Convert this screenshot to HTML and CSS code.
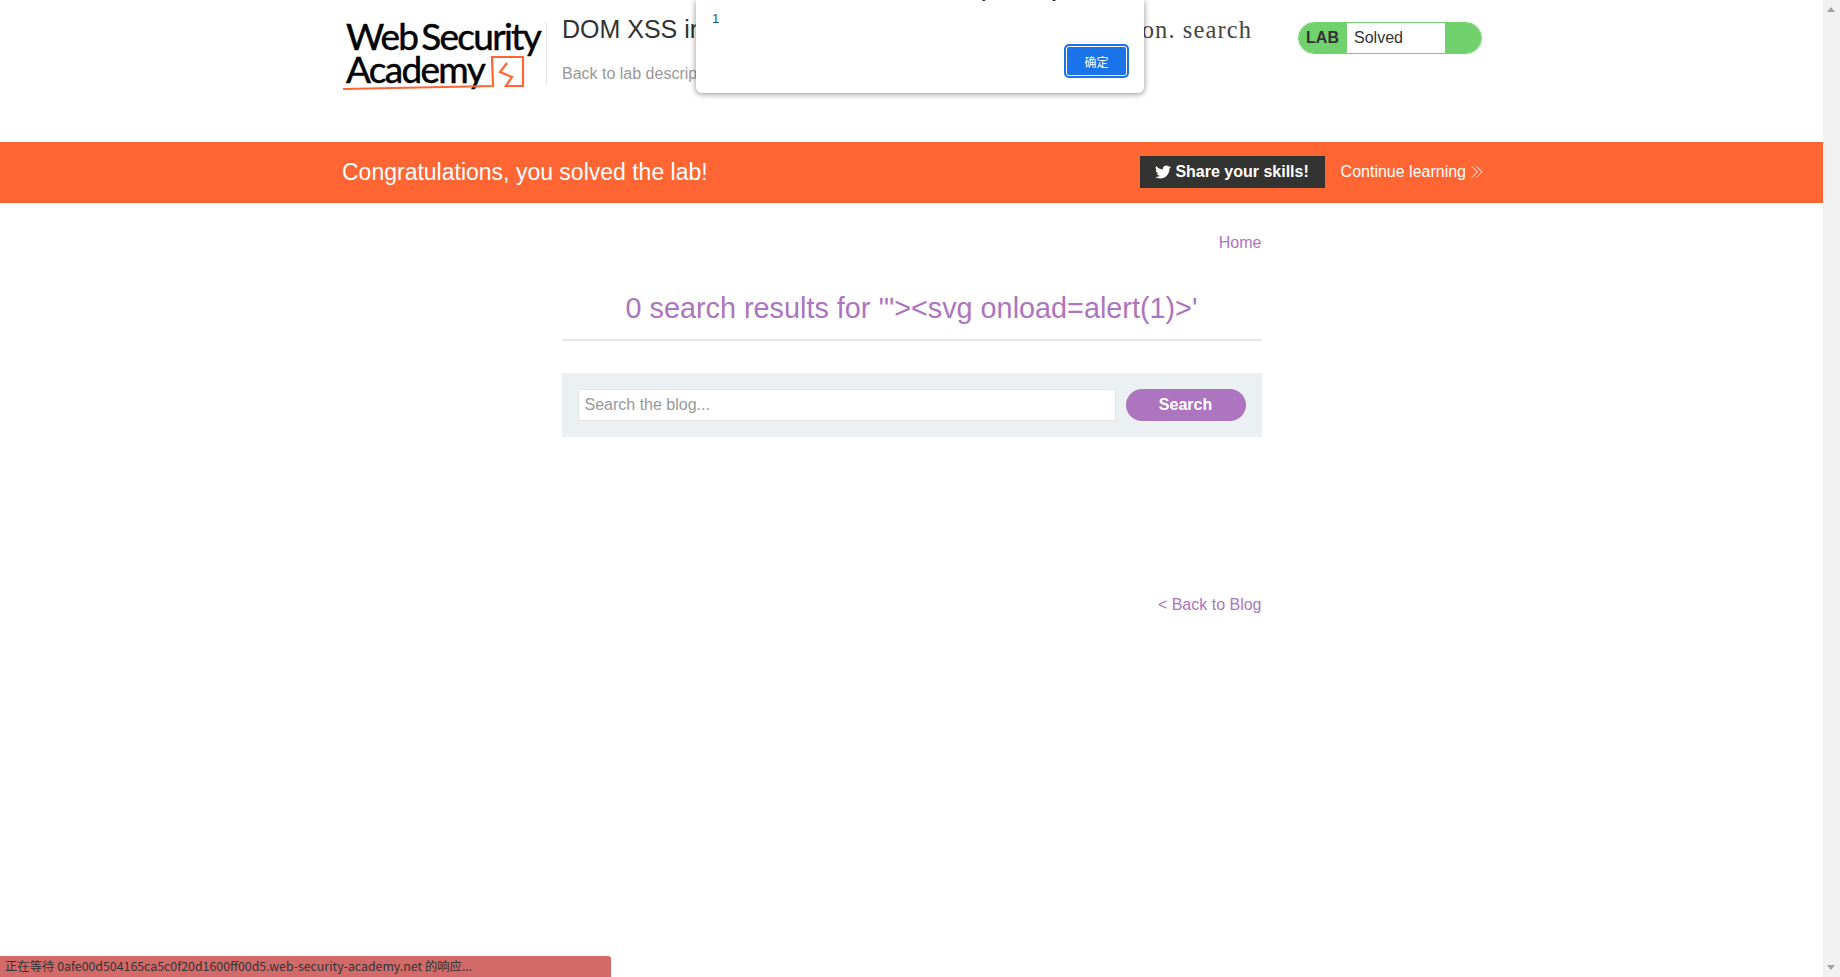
FILE: index.html
```html
<!DOCTYPE html>
<html lang="en">
<head>
    <meta charset="UTF-8">
    <title>DOM XSS in document.write sink using source location.search</title>
    <link rel="stylesheet" href="styles.css">
</head>
<body>

<div class="viewport">
    <div class="page">
        <header class="lab-header">
            <div class="logo">
                <div class="logo-line">Web Security</div>
                <div class="logo-line">Academy</div>
                <svg class="logo-mark" viewBox="0 0 204 72" fill="none">
                    <path d="M165 43 L158 52 L170 57 L164 66 L181 66 L181 37 L150 37 L151 66 C100 67 50 68 1 69" stroke="#ff6633" stroke-width="2.2"/>
                </svg>
            </div>
            <div class="lab-title">
                <h2><span class="title-main">DOM XSS in document.write sink using source</span> <span class="title-code">location. search</span></h2>
                <a class="back-link" href="#">Back to lab description</a>
            </div>
            <div class="lab-status">
                <span class="lab-label">LAB</span>
                <span class="lab-state">Solved</span>
                <span class="lab-end"></span>
            </div>
        </header>

        <section class="solved-banner">
            <div class="banner-inner">
                <h4>Congratulations, you solved the lab!</h4>
                <div class="banner-actions">
                    <a class="share-btn" href="#">
                        <svg class="tw-icon" viewBox="0 0 24 24"><path fill="#fff" d="M23.95 4.57a10 10 0 0 1-2.82.77 4.96 4.96 0 0 0 2.16-2.72c-.95.55-2 .95-3.12 1.18a4.92 4.92 0 0 0-8.38 4.48C7.69 8.1 4.07 6.13 1.64 3.16a4.82 4.82 0 0 0-.67 2.48c0 1.71.87 3.21 2.19 4.1a4.9 4.9 0 0 1-2.23-.62v.06a4.92 4.92 0 0 0 3.95 4.83 5 5 0 0 1-2.21.08 4.94 4.94 0 0 0 4.6 3.42A9.87 9.87 0 0 1 0 19.54a14 14 0 0 0 7.56 2.21c9.05 0 14-7.5 14-13.98 0-.21 0-.42-.02-.63a9.94 9.94 0 0 0 2.46-2.55z"/></svg>
                        Share your skills!
                    </a>
                    <a class="continue-link" href="#">Continue learning
                        <svg class="chevrons" viewBox="0 0 13 13" fill="none"><path d="M1 .5l6 6-6 6M6 .5l6 6-6 6" stroke="#fff" stroke-width="1"/></svg>
                    </a>
                </div>
            </div>
        </section>

        <main class="blog">
            <nav class="blog-nav"><a href="#">Home</a></nav>
            <h1>0 search results for '"&gt;&lt;svg onload=alert(1)&gt;'</h1>
            <hr class="rule">
            <form class="search-box">
                <input type="text" placeholder="Search the blog...">
                <button type="button">Search</button>
            </form>
            <div class="back-row"><a href="#">&lt; Back to Blog</a></div>
        </main>
    </div>

    <div class="scrollbar">
        <span class="arrow arrow-up"></span>
        <span class="arrow arrow-down"></span>
    </div>
</div>

<!-- Диалог alert поверх страницы -->
<div class="alert-box">
    <div class="alert-title">0afe00d504165ca5c0f20d1600ff00d5.web-security-academy.net 显示</div>
    <div class="alert-msg">1</div>
    <button class="alert-ok" type="button">确定</button>
</div>

<div class="status-bar">正在等待 0afe00d504165ca5c0f20d1600ff00d5.web-security-academy.net 的响应...</div>

</body>
</html>
```

FILE: styles.css
```css
html, body {
    margin: 0;
    height: 100%;
    overflow: hidden;
}

body {
    font-family: "Liberation Sans", Arial, sans-serif;
    color: #333332;
    background: #fff;
}

a {
    text-decoration: none;
    color: #ad75c0;
}

.viewport {
    display: flex;
    height: 977px;
}

.page {
    flex: 1;
    min-width: 0;
}

/* Шапка */
.lab-header {
    display: flex;
    align-items: flex-start;
    height: 142px;
    margin: 0 341px 0 342px;
}

.logo {
    position: relative;
    flex: none;
    width: 204px;
    height: 72px;
    margin-top: 19px;
    padding-left: 4px;
    box-sizing: border-box;
    font-family: Lato, "Open Sans", sans-serif;
    font-size: 37px;
    line-height: 33px;
    letter-spacing: -1.7px;
    word-spacing: -4px;
    color: #000;
    -webkit-text-stroke: 0.5px #000;
    white-space: nowrap;
}

.logo-mark {
    position: absolute;
    left: 0;
    top: 1px;
    width: 204px;
    height: 72px;
}

.lab-title {
    display: flex;
    flex-direction: column;
    flex: none;
    box-sizing: border-box;
    width: 706px;
    height: 63px;
    margin-top: 22px;
    padding-left: 15px;
    border-left: 1px solid #e6e6e6;
}

.lab-title h2 {
    display: flex;
    justify-content: space-between;
    margin: -8px 0 0;
    font-size: 25px;
    font-weight: normal;
    line-height: 30px;
    white-space: nowrap;
    overflow: hidden;
}

.title-main {
    min-width: 0;
    overflow: hidden;
}

.title-code {
    flex: none;
    padding-top: 1px;
    font-family: "Liberation Serif", serif;
    font-size: 24.5px;
    letter-spacing: 1.1px;
    color: #444;
}

.back-link {
    margin-top: 19px;
    color: #999;
    font-size: 16px;
    line-height: 20px;
    white-space: nowrap;
}

.lab-status {
    display: flex;
    align-items: stretch;
    flex: none;
    width: 184px;
    height: 32px;
    margin-top: 22px;
    margin-left: auto;
    box-sizing: border-box;
    border: 1px solid #70d16d;
    border-radius: 16px;
    overflow: hidden;
    font-size: 16px;
}

.lab-label {
    width: 47px;
    padding-right: 1px;
    background: #70d16d;
    font-weight: bold;
    line-height: 30px;
    text-align: center;
}

.lab-state {
    width: 91px;
    padding-left: 7px;
    line-height: 29px;
    background: #fff;
}

.lab-end {
    flex: 1;
    background: #70d16d;
}

/* Баннер */
.solved-banner {
    height: 61px;
    background: #ff6633;
}

.banner-inner {
    display: flex;
    align-items: center;
    justify-content: space-between;
    height: 100%;
    margin: 0 340px 0 342px;
}

.banner-inner h4 {
    margin: 0;
    font-size: 23px;
    font-weight: normal;
    color: #fff;
}

.banner-actions {
    display: flex;
    align-items: center;
    gap: 16px;
    padding-bottom: 1px;
}

.share-btn {
    display: flex;
    align-items: center;
    justify-content: center;
    gap: 4px;
    width: 185px;
    height: 32px;
    background: #333332;
    color: #fff;
    font-size: 16px;
    font-weight: bold;
}

.tw-icon {
    width: 16px;
    height: 16px;
}

.continue-link {
    display: flex;
    align-items: center;
    gap: 5px;
    color: #fff;
    font-size: 16px;
}

.chevrons {
    width: 12px;
    height: 12px;
}

/* Блог */
.blog {
    width: 700px;
    margin: 0 auto;
}

.blog-nav {
    padding-top: 31px;
    line-height: 18px;
    text-align: right;
    font-size: 16px;
}

.blog h1 {
    margin: 39px 0 0;
    font-size: 28.8px;
    font-weight: normal;
    line-height: 34px;
    text-align: center;
    color: #ad75c0;
}

.rule {
    height: 2px;
    margin: 14px 0 0;
    border: 0;
    background: #e6e6e6;
}

.search-box {
    display: flex;
    align-items: center;
    gap: 10px;
    height: 64px;
    margin-top: 32px;
    padding: 0 16px;
    background: #ebf0f2;
}

.search-box input {
    flex: 1;
    height: 32px;
    box-sizing: border-box;
    padding: 0 6px;
    border: 1px solid #e6e6e6;
    background: #fff;
    font-family: inherit;
    font-size: 16px;
}

.search-box input::placeholder {
    color: #999;
}

.search-box button {
    width: 120px;
    height: 32px;
    border: 0;
    border-radius: 16px;
    background: #ad75c0;
    color: #fff;
    font-family: inherit;
    font-size: 16px;
    font-weight: bold;
}

.back-row {
    margin-top: 159px;
    line-height: 18px;
    text-align: right;
    font-size: 16px;
}

/* Полоса прокрутки */
.scrollbar {
    position: relative;
    width: 17px;
    background: #f1f1f1;
}

.arrow {
    position: absolute;
    left: 4px;
    width: 0;
    height: 0;
    border-left: 4.5px solid transparent;
    border-right: 4.5px solid transparent;
}

.arrow-up {
    top: 7px;
    border-bottom: 5px solid #a3a3a3;
}

.arrow-down {
    bottom: 7px;
    border-top: 5px solid #a3a3a3;
}

/* Диалог */
.alert-box {
    position: absolute;
    left: 696px;
    top: 0;
    width: 448px;
    height: 93px;
    overflow: hidden;
    background: #fff;
    border-radius: 0 0 6px 6px;
    box-shadow: 0 1px 6px rgba(0, 0, 0, 0.45);
    font-family: "Noto Sans CJK SC", "Liberation Sans", sans-serif;
}

.alert-title {
    position: absolute;
    left: -65px;
    top: -17px;
    font-family: "Liberation Sans", "Noto Sans CJK SC", sans-serif;
    font-size: 16px;
    line-height: 20px;
    white-space: nowrap;
    color: #202124;
}

.alert-msg {
    position: absolute;
    left: 16px;
    top: 11px;
    font-family: "Liberation Sans", sans-serif;
    font-size: 13px;
    line-height: 16px;
    color: #1a4f8a;
}

.alert-ok {
    position: absolute;
    right: 15px;
    top: 44px;
    width: 65px;
    height: 34px;
    box-sizing: border-box;
    border: 2px solid #1a73e8;
    border-radius: 5px;
    background: #1a73e8;
    box-shadow: inset 0 0 0 1px #fff;
    color: #fff;
    font-family: inherit;
    font-size: 12px;
}

.status-bar {
    position: fixed;
    left: 0;
    bottom: 0;
    width: 611px;
    height: 21px;
    box-sizing: border-box;
    padding-left: 5px;
    background: #d26a6a;
    border-top-right-radius: 3px;
    font-family: "Noto Sans CJK SC", "Liberation Sans", sans-serif;
    font-size: 12.35px;
    line-height: 20px;
    color: #333;
    white-space: nowrap;
}
```
